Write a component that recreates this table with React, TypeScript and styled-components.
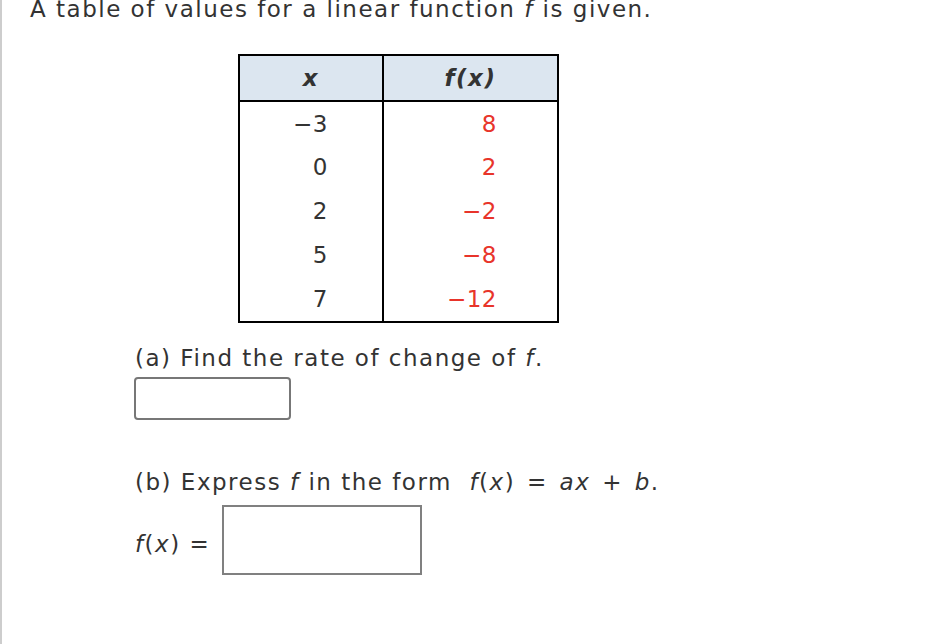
import React from "react";
import styled, { createGlobalStyle } from "styled-components";

const GlobalStyle = createGlobalStyle`
  html, body { margin: 0; padding: 0; background: #fff; }
  body {
    font-family: "DejaVu Sans", Verdana, sans-serif;
    color: #333;
  }
  * { box-sizing: border-box; }
`;

const Page = styled.div`
  height: 644px;
  border-left: 2px solid #cdcdcd;
  overflow: hidden;
  font-size: 23px;
  line-height: 26px;
  letter-spacing: 1.5px;
`;

const Title = styled.div`
  margin-top: -4px;
  padding-left: 28px;
  white-space: nowrap;
`;

const TableWrap = styled.div`
  margin-top: 32px;
  padding-left: 236px;
`;

const ValueTable = styled.table`
  border-collapse: collapse;
  border: 2px solid #000;
  letter-spacing: 0.5px;
`;

const HeadCell = styled.th<{ $w: number }>`
  width: ${(p) => p.$w}px;
  height: 46px;
  padding: 0;
  background: #dce6f0;
  border: 2px solid #000;
  font-weight: bold;
  font-style: italic;
  text-align: center;
  letter-spacing: 1.5px;
  color: #333;
`;

const Cell = styled.td<{ $pad: number; $red?: boolean }>`
  height: 44px;
  padding: 0 ${(p) => p.$pad}px 0 0;
  border-left: 2px solid #000;
  border-right: 2px solid #000;
  text-align: right;
  color: ${(p) => (p.$red ? "#e8342a" : "#333")};
`;

const LastCell = styled(Cell)`
  height: 45px;
  padding-bottom: 1px;
`;

const Questions = styled.div`
  padding-left: 133px;
`;

const Prompt = styled.div<{ $top: number }>`
  margin-top: ${(p) => p.$top}px;
  white-space: nowrap;
`;

const I = styled.i`
  font-style: italic;
`;

const Op = styled.span`
  padding: 0 3px;
`;

const SmallBox = styled.div`
  margin-top: 6px;
  margin-left: -1px;
  width: 157px;
  height: 43px;
  border: 2px solid #777;
  border-radius: 4px;
  background: #fff;
`;

const AnswerRow = styled.div`
  margin-top: 10px;
  display: flex;
  align-items: flex-start;
  gap: 12px;
`;

const Label = styled.div`
  margin-top: 26px;
  white-space: nowrap;
`;

const BigBox = styled.div`
  width: 200px;
  height: 70px;
  border: 2px solid #808080;
  background: #fff;
`;

const rows: [string, string][] = [
  ["\u22123", "8"],
  ["0", "2"],
  ["2", "\u22122"],
  ["5", "\u22128"],
  ["7", "\u221212"],
];

export default function App() {
  return (
    <>
      <GlobalStyle />
      <Page>
        <Title>
          A table of values for a linear function <I>f</I> is given.
        </Title>
        <TableWrap>
          <ValueTable>
            <thead>
              <tr>
                <HeadCell $w={144}>x</HeadCell>
                <HeadCell $w={175}>f(x)</HeadCell>
              </tr>
            </thead>
            <tbody>
              {rows.map(([x, y], i) => {
                const C = i === rows.length - 1 ? LastCell : Cell;
                return (
                  <tr key={x}>
                    <C $pad={54}>{x}</C>
                    <C $pad={60} $red>
                      {y}
                    </C>
                  </tr>
                );
              })}
            </tbody>
          </ValueTable>
        </TableWrap>
        <Questions>
          <Prompt $top={22}>
            (a) Find the rate of change of <I>f</I>.
          </Prompt>
          <SmallBox />
          <Prompt $top={49}>
            (b) Express <I>f</I> in the form&nbsp;&nbsp;<I>f</I>(<I>x</I>) <Op>=</Op>{" "}
            <I>a</I>
            <I>x</I> <Op>+</Op> <I>b</I>.
          </Prompt>
          <AnswerRow>
            <Label>
              <I>f</I>(<I>x</I>) =
            </Label>
            <BigBox />
          </AnswerRow>
        </Questions>
      </Page>
    </>
  );
}
